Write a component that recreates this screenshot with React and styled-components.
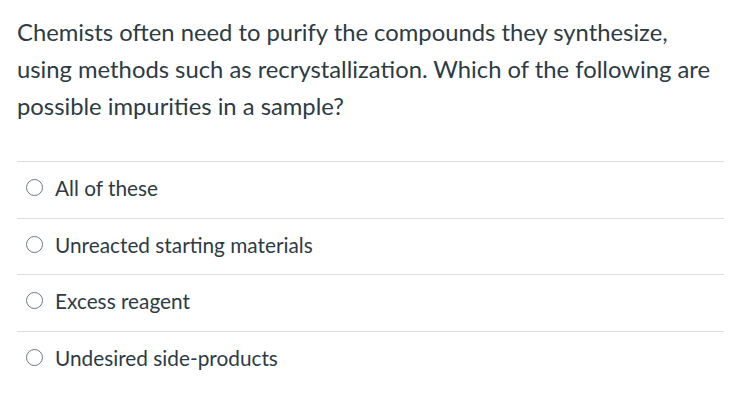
import React from "react";
import styled, { createGlobalStyle } from "styled-components";

const GlobalStyle = createGlobalStyle`
  body {
    margin: 0;
    background: #ffffff;
    font-family: Lato, "Liberation Sans", sans-serif;
    color: #2d3b45;
  }
`;

const QuizDiv = styled.div`
  padding: 14px 21px 0 17px;
`;

const QuestionText = styled.p`
  margin: 0;
  max-width: 704px;
  font-size: 23.8px;
  line-height: 37px;
  color: #2d3b45;
`;

const AnswerList = styled.div`
  margin-top: 36px;
  border-top: 1px solid #dddddd;
`;

const AnswerRow = styled.label`
  display: flex;
  align-items: center;
  box-sizing: border-box;
  height: 56.7px;
  padding: 0 0 5px 9px;
  border-bottom: 1px solid #dddddd;
  font-size: 20.8px;
  color: #2d3b45;

  &:last-child {
    border-bottom: none;
  }
`;

const RadioCircle = styled.span`
  width: 17px;
  height: 17px;
  border: 1.6px solid #6b7780;
  border-radius: 50%;
  margin-right: 12px;
  box-sizing: border-box;
  flex-shrink: 0;
`;

const answers = [
  "All of these",
  "Unreacted starting materials",
  "Excess reagent",
  "Undesired side-products",
];

const App = () => {
  return (
    <QuizDiv>
      <GlobalStyle />
      <QuestionText>
        Chemists often need to purify the compounds they synthesize, using
        methods such as recrystallization. Which of the following are possible
        impurities in a sample?
      </QuestionText>
      <AnswerList>
        {answers.map((a) => (
          <AnswerRow key={a}>
            <RadioCircle />
            {a}
          </AnswerRow>
        ))}
      </AnswerList>
    </QuizDiv>
  );
};

export default App;
